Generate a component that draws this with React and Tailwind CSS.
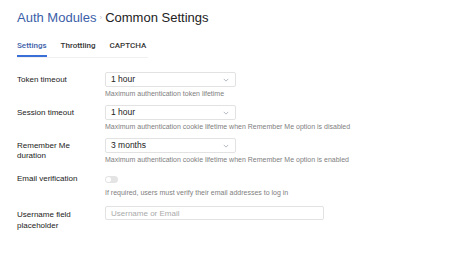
import React, { useState } from "react";

const font = { fontFamily: "'Liberation Sans', Arial, sans-serif" };

function Chevron() {
  return (
    <svg width="6" height="4" viewBox="0 0 8 5" className="text-gray-400">
      <path d="M1 1l3 3 3-3" fill="none" stroke="currentColor" strokeWidth="1" />
    </svg>
  );
}

function SelectBox({ value }) {
  return (
    <div className="flex items-center justify-between w-[131px] h-[15px] border border-[#e2e2e2] rounded-[2px] pl-[5px] pr-[6px] bg-white">
      <span className="text-[8.5px] text-[#222]">{value}</span>
      <Chevron />
    </div>
  );
}

function Row({ label, children, help }) {
  return (
    <div className="flex h-[33px]">
      <div className="w-[88px] pt-[3px] text-[8px] leading-[10px] text-[#222]">{label}</div>
      <div className="flex flex-col">
        {children}
        <div className="h-[10px] mt-[2px] text-[7px] leading-[10px] text-[#808080] whitespace-nowrap">{help}</div>
      </div>
    </div>
  );
}

function App() {
  const [tab] = useState("Settings");
  const tabs = ["Settings", "Throttling", "CAPTCHA"];

  return (
    <div className="w-[474px] h-[257px] bg-white px-[17px] pt-[9px]" style={font}>
      <div className="flex items-center text-[13px] leading-[18px]">
        <span className="text-[#3b5ea8]">Auth Modules</span>
        <span className="text-[#c8c8c8] text-[8px] mx-[3px]">›</span>
        <span className="text-[#222]">Common Settings</span>
      </div>

      <div className="flex gap-[14px] mt-[14px] border-b border-[#f0f0f0] w-[131px]" style={{ fontFamily: "Roboto, 'Liberation Sans', sans-serif" }}>
        {tabs.map((t) => (
          <div
            key={t}
            className={
              t === tab
                ? "pb-[4px] text-[8px] leading-[10px] font-medium text-[#3b5ea8] border-b-2 border-[#3b6fd8]"
                : "pb-[4px] text-[8px] leading-[10px] font-medium text-[#333]"
            }
          >
            {t}
          </div>
        ))}
      </div>

      <div className="mt-[14px]">
        <Row label="Token timeout" help="Maximum authentication token lifetime">
          <SelectBox value="1 hour" />
        </Row>
        <Row label="Session timeout" help="Maximum authentication cookie lifetime when Remember Me option is disabled">
          <SelectBox value="1 hour" />
        </Row>
        <Row label={<>Remember Me<br />duration</>} help="Maximum authentication cookie lifetime when Remember Me option is enabled">
          <SelectBox value="3 months" />
        </Row>
        <Row label="Email verification" help="If required, users must verify their email addresses to log in">
          <div className="h-[15px] flex items-center pt-[2px]">
            <div className="w-[13px] h-[7px] rounded-full bg-[#e4e4e4] flex items-center px-[1px]">
              <div className="w-[5px] h-[5px] rounded-full bg-white" />
            </div>
          </div>
        </Row>
        <div className="flex pt-[2px]">
          <div className="w-[88px] pt-[3px] text-[8px] leading-[11px] text-[#222]">Username field<br />placeholder</div>
          <input
            placeholder="Username or Email"
            className="w-[219px] h-[14px] border border-[#e2e2e2] rounded-[2px] px-[5px] text-[8px] placeholder:text-[#aaa] outline-none"
            style={font}
          />
        </div>
      </div>
    </div>
  );
}

export default App;
